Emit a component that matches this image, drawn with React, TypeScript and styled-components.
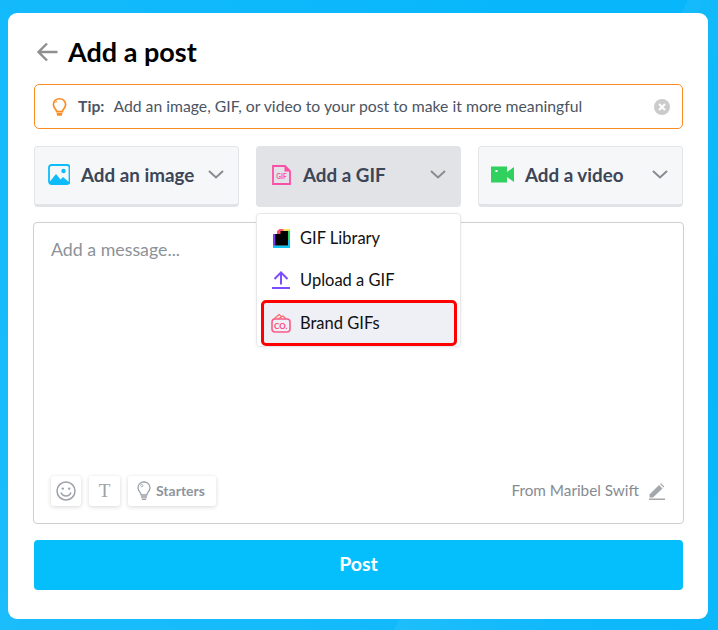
import styled, { createGlobalStyle } from 'styled-components';

const GlobalStyle = createGlobalStyle`
  html, body {
    margin: 0;
    padding: 0;
    height: 100%;
  }
  body {
    font-family: 'Lato', 'Noto Sans', sans-serif;
    overflow: hidden;
  }
`;

const BackArrow = () => (
  <svg width="22" height="20" viewBox="0 0 22 20" fill="none" stroke="#8f8f8f" strokeWidth="2.4">
    <path d="M21.5 10H2.5M11 1.5L2.5 10L11 18.5" />
  </svg>
);

const TipBulb = () => (
  <svg width="15" height="20" viewBox="0 0 16 20" fill="none">
    <path
      d="M8 1.2C4.3 1.2 1.5 4 1.5 7.4c0 2.6 1.500 3.900 2.600 5.600.5.800.7 1.400.8 2h6.200c.1-.6.3-1.200.8-2 1.100-1.700 2.600-3 2.600-5.600C14.500 4 11.700 1.200 8 1.200z"
      stroke="#fb8c24"
      strokeWidth="1.8"
    />
    <path d="M5 3.800c-.6.500-1 1.100-1.100 1.900" stroke="#fb8c24" strokeWidth="1" />
    <path d="M4.800 16.400h6.400l-.7 2.800H5.500z" fill="#fb8c24" />
  </svg>
);

const CloseCircle = () => (
  <svg width="16" height="16" viewBox="0 0 16 16">
    <circle cx="8" cy="8" r="8" fill="#cbcbcb" />
    <path d="M5 5l6 6M11 5l-6 6" stroke="#fff" strokeWidth="2" />
  </svg>
);

const ImageIcon = () => (
  <svg width="22" height="21" viewBox="0 0 22 21" fill="none">
    <rect x="1" y="1" width="20.500" height="19" rx="2.500" stroke="#0dbcf9" strokeWidth="1.800" />
    <circle cx="15.500" cy="7" r="2.200" fill="#0dbcf9" />
    <path d="M1.500 18l6.500-8 4.500 5.500 2.500-2.500 6 5v1.500h-19.500z" fill="#0dbcf9" />
  </svg>
);

const GifFileIcon = () => (
  <svg width="20" height="20" viewBox="0 0 20 20" fill="none">
    <path d="M1 1h12l5 5v13H1z" stroke="#fb4fa5" strokeWidth="1.800" />
    <path d="M12.500 1v5.500H18z" fill="#fb4fa5" />
    <text x="9.500" y="14" textAnchor="middle" fontSize="6.500" fontWeight="700" fill="#fb4fa5" fontFamily="Lato, sans-serif">
      GIF
    </text>
  </svg>
);

const VideoIcon = () => (
  <svg width="23" height="17" viewBox="0 0 23 17">
    <path d="M0 0.500h16v5.500l7-5v15l-7-5v5.500h-16z" fill="#30d15f" />
    <rect x="4.500" y="4" width="2" height="2" fill="#fff" />
  </svg>
);

const Chevron = () => (
  <svg width="16" height="9" viewBox="0 0 16 9" fill="none" stroke="#868b92" strokeWidth="2">
    <path d="M1 1l7 6.500L15 1" />
  </svg>
);

const LibraryIcon = () => (
  <svg width="17" height="19" viewBox="0 0 17 19">
    <path d="M2 5h5V1.700h8V16.700H2z" fill="#000" />
    <rect x="0" y="5" width="2.300" height="14" fill="#7b3ff2" />
    <rect x="0" y="16.700" width="17" height="2.300" fill="#10c3f5" />
    <rect x="15" y="11" width="2" height="8" fill="#10c3f5" />
    <rect x="15" y="1.500" width="2" height="9.500" fill="#2fd566" />
    <rect x="10.500" y="0" width="6.500" height="1.700" fill="#fde34b" />
    <path d="M1.500 5H4V2L6.500 0h4v1.700h-3V5z" fill="#f9506b" />
  </svg>
);

const UploadIcon = () => (
  <svg width="18" height="18" viewBox="0 0 18 18" fill="none" stroke="#7c4dff" strokeWidth="2">
    <path d="M9 13.500V2M2.500 8L9 1.500 15.500 8M0 17h18" />
  </svg>
);

const BrandIcon = () => (
  <svg width="20" height="20" viewBox="0 0 20 20" fill="none">
    <rect x="1" y="6" width="18" height="13" rx="3" stroke="#fb5a8b" strokeWidth="1.600" />
    <path d="M3 6l5-4.500 3 2.500M7 6l5-3 3 3" stroke="#f96a6a" strokeWidth="1.300" />
    <text x="9.800" y="15.800" textAnchor="middle" fontSize="8" fontWeight="900" fill="#f9527f" fontFamily="Lato, sans-serif">
      CO.
    </text>
  </svg>
);

const SmileIcon = () => (
  <svg width="20" height="20" viewBox="0 0 20 20" fill="none" stroke="#9ca1a9" strokeWidth="1.500">
    <circle cx="10" cy="10" r="9" />
    <circle cx="6.800" cy="7.600" r="1.200" fill="#9ca1a9" stroke="none" />
    <circle cx="13.200" cy="7.600" r="1.200" fill="#9ca1a9" stroke="none" />
    <path d="M5 11.500c1 2.500 3 3.500 5 3.500s4-1 5-3.500" />
  </svg>
);

const StarterBulb = () => (
  <svg width="14" height="20" viewBox="0 0 14 20" fill="none">
    <path
      d="M7 1C3.500 1 1 3.500 1 6.700c0 2.400 1.400 3.600 2.400 5.200.5.800.7 1.400.8 2.100h5.600c.1-.7.300-1.300.8-2.100C11.600 10.300 13 9.100 13 6.700 13 3.500 10.500 1 7 1z"
      stroke="#9ca1a9"
      strokeWidth="1.300"
    />
    <circle cx="4.800" cy="4.600" r="1.200" stroke="#9ca1a9" strokeWidth="0.800" />
    <path d="M4 15.200h6v1.500H4zM4.800 17.500h4.400v1.500H4.800z" fill="#9ca1a9" />
  </svg>
);

const PencilIcon = () => (
  <svg width="16" height="17" viewBox="0 0 16 17">
    <path d="M0.500 11.500L10 2l3.500 3.500L4 14.500H0.500z" fill="#a4a7ac" />
    <path d="M11 1l1-.8 3.300 3.300-.8 1z" fill="#a4a7ac" />
    <rect x="0" y="15.500" width="16" height="1.500" fill="#a4a7ac" />
  </svg>
);

const App = () => (
  <>
    <GlobalStyle />
    <Page>
      <Card>
        <Header>
          <BackArrow />
          <Title>Add a post</Title>
        </Header>

        <TipBox>
          <TipBulb />
          <TipText>
            <strong>Tip:</strong>Add an image, GIF, or video to your post to make it more meaningful
          </TipText>
          <CloseCircle />
        </TipBox>

        <MediaRow>
          <MediaColumn>
            <MediaButton $inset={13}>
              <ImageIcon />
              <MediaLabel>Add an image</MediaLabel>
              <Chevron />
            </MediaButton>
          </MediaColumn>
          <MediaColumn>
            <MediaButton $inset={15} $open>
              <GifFileIcon />
              <MediaLabel>Add a GIF</MediaLabel>
              <Chevron />
            </MediaButton>
            <Dropdown>
              <DropdownItem>
                <ItemIcon>
                  <LibraryIcon />
                </ItemIcon>
                GIF Library
              </DropdownItem>
              <DropdownItem>
                <ItemIcon>
                  <UploadIcon />
                </ItemIcon>
                Upload a GIF
              </DropdownItem>
              <DropdownItem $selected>
                <ItemIcon>
                  <BrandIcon />
                </ItemIcon>
                Brand GIFs
              </DropdownItem>
            </Dropdown>
          </MediaColumn>
          <MediaColumn>
            <MediaButton $inset={12}>
              <VideoIcon />
              <MediaLabel>Add a video</MediaLabel>
              <Chevron />
            </MediaButton>
          </MediaColumn>
        </MediaRow>

        <MessageBox>
          <Placeholder>Add a message...</Placeholder>
          <MessageFooter>
            <ToolGroup>
              <ToolButton>
                <SmileIcon />
              </ToolButton>
              <ToolButton $letter>
                <SerifT>T</SerifT>
              </ToolButton>
              <ToolButton $wide>
                <StarterBulb />
                <StarterLabel>Starters</StarterLabel>
              </ToolButton>
            </ToolGroup>
            <Signature>
              <SignatureName>From Maribel Swift</SignatureName>
              <PencilIcon />
            </Signature>
          </MessageFooter>
        </MessageBox>

        <PostButton>Post</PostButton>
      </Card>
    </Page>
  </>
);

export default App;

const Page = styled.div`
  width: 718px;
  height: 630px;
  box-sizing: border-box;
  padding: 13px 10px 11px 8px;
  background:
    linear-gradient(115deg, rgba(255, 255, 255, 0) 68%, rgba(255, 255, 255, 0.05) 68%, rgba(255, 255, 255, 0) 85%),
    linear-gradient(60deg, rgba(255, 255, 255, 0.08) 0%, rgba(255, 255, 255, 0.03) 50%, rgba(255, 255, 255, 0) 80%),
    #08b7fb;
`;

const Card = styled.div`
  height: 100%;
  box-sizing: border-box;
  background: #fff;
  border-radius: 9px;
  padding: 22px 25px 29px 26px;
  display: flex;
  flex-direction: column;
`;

const Header = styled.div`
  display: flex;
  align-items: center;
  gap: 10px;
  height: 34px;
  padding-left: 2px;
`;

const Title = styled.h1`
  margin: 0 0 2px;
  font-size: 27px;
  font-weight: 700;
  color: #000;
`;

const TipBox = styled.div`
  margin-top: 15px;
  height: 45px;
  box-sizing: border-box;
  border: 1px solid #fb8c24;
  border-radius: 5px;
  display: flex;
  align-items: center;
  padding: 0 12px 0 17px;
  gap: 11px;
`;

const TipText = styled.div`
  flex: 1;
  font-size: 15.75px;
  color: #4b5563;
  margin-bottom: 2px;

  strong {
    font-weight: 700;
    margin-right: 9px;
  }
`;

const MediaRow = styled.div`
  margin-top: 17px;
  display: grid;
  grid-template-columns: repeat(3, 205px);
  justify-content: space-between;
`;

const MediaColumn = styled.div`
  position: relative;
`;

const MediaButton = styled.div<{ $open?: boolean; $inset: number }>`
  height: 61px;
  box-sizing: border-box;
  display: flex;
  align-items: center;
  gap: 11px;
  padding: 0 14px 2px ${(p) => p.$inset}px;
  border-radius: 4px;
  background: ${(p) => (p.$open ? '#e2e3e7' : '#f6f7f9')};
  border: 1px solid ${(p) => (p.$open ? '#e2e3e7' : '#e4e5e8')};
  border-bottom: 3px solid #e2e3e7;
`;

const MediaLabel = styled.span`
  flex: 1;
  font-size: 18.8px;
  font-weight: 700;
  color: #3c4656;
  margin-bottom: 1px;
`;

const Dropdown = styled.div`
  position: absolute;
  top: 67px;
  left: 0;
  z-index: 2;
  width: 205px;
  height: 134px;
  box-sizing: border-box;
  padding: 3px 6px 0 7px;
  background: #fff;
  border: 1px solid #e8e8ea;
  border-radius: 4px;
  box-shadow: 0 1px 4px rgba(0, 0, 0, 0.06);
  display: grid;
  grid-auto-rows: 42px;
`;

const DropdownItem = styled.div<{ $selected?: boolean }>`
  display: flex;
  align-items: center;
  gap: 9px;
  font-size: 16.5px;
  color: #111;
  ${(p) =>
    p.$selected
      ? `
    background: #eff0f5;
    outline: 3.5px solid #ff0000;
    border-radius: 2px;
    margin-top: 2px;
    height: 40px;
  `
      : ''}
`;

const ItemIcon = styled.span`
  width: 20px;
  margin-left: 7px;
  display: flex;
  justify-content: center;
`;

const MessageBox = styled.div`
  margin-top: 15px;
  margin-left: -1px;
  margin-right: -1px;
  flex: 1;
  box-sizing: border-box;
  border: 1px solid #cfcfcf;
  border-radius: 4px;
  padding: 15px 18px 17px 17px;
  display: flex;
  flex-direction: column;
  justify-content: space-between;
`;

const Placeholder = styled.div`
  font-size: 17.8px;
  color: #8d9299;
`;

const MessageFooter = styled.div`
  display: flex;
  align-items: center;
  justify-content: space-between;
`;

const ToolGroup = styled.div`
  display: flex;
  gap: 8px;
`;

const ToolButton = styled.div<{ $wide?: boolean; $letter?: boolean }>`
  height: 30px;
  min-width: ${(p) => (p.$letter ? '31px' : '30px')};
  box-sizing: border-box;
  display: flex;
  align-items: center;
  justify-content: center;
  gap: 5px;
  padding: ${(p) => (p.$wide ? '0 11px 0 9px' : '0')};
  border-radius: 3px;
  background: #fff;
  box-shadow: 0 1px 4px rgba(0, 0, 0, 0.16);
`;

const StarterLabel = styled.span`
  font-size: 14px;
  font-weight: 700;
  color: #8f949c;
  margin-bottom: 2px;
`;

const SerifT = styled.span`
  font-family: 'Liberation Serif', serif;
  font-size: 19px;
  font-weight: 400;
  color: #9ca1a9;
`;

const Signature = styled.div`
  display: flex;
  align-items: center;
  gap: 10px;
`;

const SignatureName = styled.span`
  font-size: 15.3px;
  color: #868b92;
  margin-bottom: 2px;
`;

const PostButton = styled.div`
  margin-top: 16px;
  height: 50px;
  flex-shrink: 0;
  box-sizing: border-box;
  padding-bottom: 3px;
  border-radius: 4px;
  background: #05bffd;
  color: #fff;
  display: flex;
  align-items: center;
  justify-content: center;
  font-size: 19.5px;
  font-weight: 700;
`;
